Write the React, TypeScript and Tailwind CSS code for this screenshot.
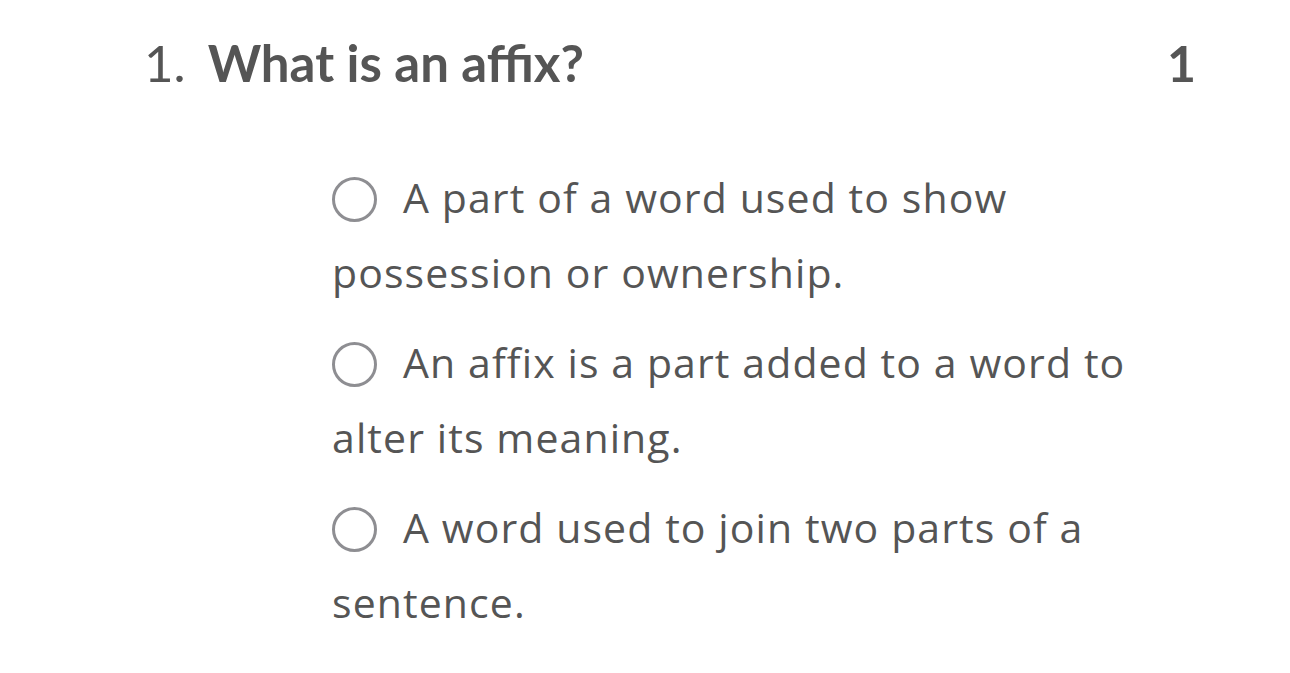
const options = [
  "A part of a word used to show possession or ownership.",
  "An affix is a part added to a word to alter its meaning.",
  "A word used to join two parts of a sentence.",
];

function Radio() {
  return (
    <span className="inline-block w-[45px] h-[45px] rounded-full border-[3px] border-[#8e8e92] align-[-9px] mr-[26px] bg-white" />
  );
}

export default function App() {
  return (
    <div className="min-h-[673px] bg-white text-[#555555] font-['Lato',sans-serif]">
      <div className="flex items-baseline pl-[144px] pr-[94px] pt-[31px]">
        <span className="text-[51px] leading-[64px] mr-[22px]">1.</span>
        <span className="text-[51px] leading-[64px] font-bold flex-1">What is an affix?</span>
        <span className="text-[50px] leading-[64px] font-bold">1</span>
      </div>
      <div className="pl-[332px] pr-[90px] mt-[65px] flex flex-col gap-[15px]">
        {options.map((o) => (
          <label key={o} className="block text-[41px] leading-[75px] tracking-[1.1px] font-['Open_Sans',sans-serif]">
            <Radio />
            {o}
          </label>
        ))}
      </div>
    </div>
  );
}
